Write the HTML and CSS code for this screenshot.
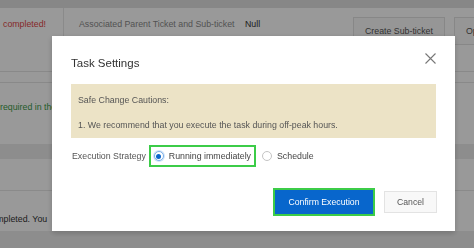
FILE: index.html
```html
<!DOCTYPE html>
<html lang="en">
<head>
    <meta charset="UTF-8">
    <meta name="viewport" content="width=device-width, initial-scale=1.0">
    <title>Task Settings</title>
    <link rel="stylesheet" href="styles.css">
</head>
<body>
    <!-- Ticket page behind the dialog -->
    <div class="page">
        <div class="top-strip"></div>
        <div class="ticket-row">
            <div class="status-col">
                <span class="status-done">completed!</span>
            </div>
            <div class="info-col">
                <span class="info-label">Associated Parent Ticket and Sub-ticket</span>
                <span class="info-value">Null</span>
            </div>
            <div class="ticket-actions">
                <button class="ghost-btn">Create Sub-ticket</button>
                <button class="ghost-btn">Operate</button>
            </div>
        </div>
        <div class="sub-row"></div>
        <div class="note-row">
            <span class="note-green">required in the</span>
        </div>
        <div class="band"></div>
        <div class="plain-row"></div>
        <div class="log-row">
            <span class="log-text">completed. You</span>
        </div>
        <div class="footer-band"></div>
    </div>

    <div class="overlay"></div>

    <!-- Task Settings dialog -->
    <div class="dialog">
        <div class="dialog-head">
            <h2>Task Settings</h2>
            <button class="close-btn" aria-label="Close">
                <svg width="11" height="11" viewBox="0 0 11 11">
                    <path d="M0.5 0.5 L10.5 10.5 M10.5 0.5 L0.5 10.5" stroke="#777" stroke-width="1.1" fill="none"/>
                </svg>
            </button>
        </div>

        <div class="caution">
            <p>Safe Change Cautions:</p>
            <p class="caution-item">1. We recommend that you execute the task during off-peak hours.</p>
        </div>

        <div class="strategy">
            <span class="strategy-label">Execution Strategy</span>
            <label class="radio highlight">
                <span class="radio-dot checked"></span>
                <span>Running immediately</span>
            </label>
            <label class="radio">
                <span class="radio-dot"></span>
                <span>Schedule</span>
            </label>
        </div>

        <div class="dialog-foot">
            <div class="highlight-btn">
                <button class="primary-btn">Confirm Execution</button>
            </div>
            <button class="cancel-btn">Cancel</button>
        </div>
    </div>
</body>
</html>
```

FILE: styles.css
```css
body {
    margin: 0;
    font-family: 'Liberation Sans', Arial, sans-serif;
    font-size: 8.8px;
    color: #444;
    overflow: hidden;
    height: 248px;
}

/* Background page */
.page {
    background: #fff;
    height: 248px;
    display: flex;
    flex-direction: column;
}

.top-strip {
    height: 8px;
    background: #e2e2e2;
}

.ticket-row {
    height: 63px;
    display: flex;
    border-bottom: 1px solid #e4e4e4;
    overflow: hidden;
}

.status-col {
    width: 64px;
    flex-shrink: 0;
    border-right: 1px solid #e6e6e6;
    padding: 11px 0 0 3px;
    box-sizing: border-box;
}

.status-done {
    color: #e04646;
}

.info-col {
    width: 289px;
    flex-shrink: 0;
    padding: 11px 0 0 15px;
    box-sizing: border-box;
    white-space: nowrap;
}

.info-label {
    color: #8a8a8a;
    margin-right: 8px;
}

.info-value {
    color: #333;
}

.ticket-actions {
    display: flex;
    gap: 9px;
    padding-top: 9px;
    flex-shrink: 0;
}

.ghost-btn {
    height: 28px;
    padding: 0 11px;
    border: 1px solid #e2e2e2;
    background: #fafafa;
    color: #555;
    font-family: inherit;
    font-size: 8.8px;
    white-space: nowrap;
}

.sub-row {
    height: 10px;
    border-bottom: 1px solid #e4e4e4;
}

.note-row {
    height: 61px;
    padding-top: 19px;
    box-sizing: border-box;
}

.note-green {
    color: #3a9a48;
}

.band {
    height: 15px;
    background: #ececec;
}

.plain-row {
    height: 31px;
    border-bottom: 1px solid #e6e6e6;
}

.log-row {
    height: 40px;
    padding-top: 23px;
    box-sizing: border-box;
    white-space: nowrap;
}

.log-text {
    margin-left: -13px;
    color: #333;
}

.footer-band {
    flex: 1;
    background: #ececec;
}

/* Dim layer and dialog */
.overlay {
    position: fixed;
    inset: 0;
    background: rgba(0, 0, 0, 0.4);
}

.dialog {
    position: fixed;
    left: 52px;
    top: 36px;
    width: 403px;
    height: 195px;
    background: #fff;
    box-shadow: 0 2px 6px rgba(0, 0, 0, 0.2);
    padding: 18px 19px 0 19px;
    box-sizing: border-box;
    display: flex;
    flex-direction: column;
}

.dialog-head {
    display: flex;
    justify-content: space-between;
    align-items: center;
    height: 18px;
}

.dialog-head h2 {
    margin: 0;
    font-size: 11.5px;
    font-weight: normal;
    color: #333;
}

.close-btn {
    border: none;
    background: none;
    padding: 0;
    margin-top: -10px;
    display: flex;
}

.caution {
    margin-top: 12px;
    height: 54px;
    background: #ece3c6;
    padding: 9px 7px 0 7px;
    box-sizing: border-box;
    color: #555;
}

.caution p {
    margin: 0;
    line-height: 14px;
}

.caution .caution-item {
    margin-top: 11px;
}

.strategy {
    margin-top: 7px;
    height: 22px;
    display: flex;
    align-items: center;
    color: #555;
    white-space: nowrap;
}

.strategy-label {
    margin: 0 3px 0 1px;
}

.radio {
    display: flex;
    align-items: center;
    gap: 5px;
    height: 22px;
    box-sizing: border-box;
    padding: 0 3px 0 3px;
    color: #444;
}

.radio.highlight {
    border: 2px solid #3ccc48;
    margin-right: 3px;
}

.radio-dot {
    width: 10px;
    height: 10px;
    border: 1px solid #c4c4c4;
    border-radius: 50%;
    background: #fff;
    box-sizing: border-box;
    display: flex;
    align-items: center;
    justify-content: center;
}

.radio-dot.checked {
    border-color: #7aaee8;
    box-shadow: 0 0 0 1px #d4e5f8;
}

.radio-dot.checked::after {
    content: '';
    width: 5px;
    height: 5px;
    border-radius: 50%;
    background: #0b66cc;
}

.dialog-foot {
    margin-top: 21px;
    display: flex;
    justify-content: flex-end;
    align-items: center;
    gap: 9px;
    margin-right: -1px;
}

.highlight-btn {
    border: 2px solid #3ccc48;
    width: 102px;
    height: 28px;
    box-sizing: border-box;
}

.primary-btn {
    width: 100%;
    height: 100%;
    border: none;
    background: #0866cc;
    color: #fff;
    font-family: inherit;
    font-size: 8.7px;
}

.cancel-btn {
    width: 53px;
    height: 22px;
    border: 1px solid #e3e3e3;
    background: #f8f8f8;
    color: #555;
    font-family: inherit;
    font-size: 8.7px;
}
```
